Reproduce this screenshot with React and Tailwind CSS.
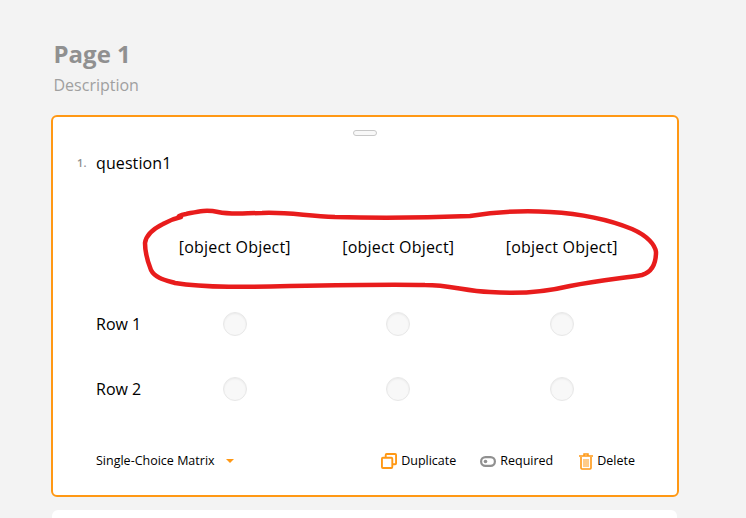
const font = "font-['Open_Sans',sans-serif]";

function Radio() {
  return (
    <div className="w-6 h-6 mx-auto rounded-full bg-[#f8f8f8] border border-[#e8e8e8] shadow-[inset_0_1px_2px_rgba(0,0,0,0.06)]" />
  );
}

function MatrixRow({ label }) {
  return (
    <>
      <div className="text-[16px] leading-[24px] font-medium text-black">{label}</div>
      <Radio />
      <Radio />
      <Radio />
    </>
  );
}

function ColumnHead() {
  return (
    <div className="text-[16px] leading-[20px] font-medium tracking-[0.2px] text-black text-center">[object Object]</div>
  );
}

function Annotation() {
  return (
    <svg
      className="absolute left-0 top-0 pointer-events-none"
      width="746"
      height="518"
      viewBox="0 0 746 518"
      fill="none"
    >
      <path
        d="M181 217 C176 217 180 215 186 214 C196 212 205 209 218 212 C232 215 245 213 262 213 C285 212 300 215 335 217 C370 218 420 218 470 216 C495 212 520 210 550 212 C585 214 610 220 632 229 C648 236 655 245 656 252 C656 263 652 272 642 275 C625 278 600 280 570 286 C545 292 515 294 490 292 C465 291 450 285 425 285 C390 284 340 285 290 286 C250 287 205 288 175 283 C165 280 155 278 151 270 C147 260 145 250 145 243 C146 235 155 228 163 224 C170 220 176 218 181 217 Z"
        stroke="#e81c1c"
        strokeWidth="4.5"
        strokeLinecap="round"
        strokeLinejoin="round"
      />
    </svg>
  );
}

function DuplicateIcon() {
  return (
    <svg width="16" height="16" viewBox="0 0 17 17" fill="none" stroke="#ff9814" strokeWidth="2">
      <path d="M5 4.5 V2 a1 1 0 0 1 1 -1 H15 a1 1 0 0 1 1 1 V11 a1 1 0 0 1 -1 1 H12.5" />
      <rect x="1" y="5" width="11" height="11" rx="1" />
    </svg>
  );
}

function ToggleIcon() {
  return (
    <svg width="16" height="11" viewBox="0 0 16 11" fill="none">
      <rect x="1.1" y="1.1" width="13.8" height="8.8" rx="4.4" stroke="#909090" strokeWidth="2.2" />
      <circle cx="5.5" cy="5.5" r="1.8" fill="#909090" />
    </svg>
  );
}

function TrashIcon() {
  return (
    <svg width="14" height="17" viewBox="0 0 14 17" fill="none" stroke="#ff9814">
      <path d="M0 3 H14 M5 3 V1 H9 V3" strokeWidth="1.5" />
      <path d="M2 4 V15 a1 1 0 0 0 1 1 H11 a1 1 0 0 0 1 -1 V4" strokeWidth="1.6" />
      <path d="M5 6 V14 M7 6 V14 M9 6 V14" strokeWidth="1" />
    </svg>
  );
}

export default function App() {
  return (
    <div className={`relative w-[746px] h-[518px] overflow-hidden bg-[#f3f3f3] ${font}`}>
      <div className="pl-[51px] w-[679px] pt-[37px]">
        <div className="pl-[2.5px]">
          <h1 className="text-[24px] leading-[33px] font-bold text-[#909090]">Page 1</h1>
          <p className="text-[16px] leading-[22px] mt-[4px] text-[#a0a0a0]">Description</p>
        </div>

        <div className="mt-[19px] h-[382px] bg-white border-2 border-[#ff9814] rounded-[6px] pl-[43px] pr-[34px] flex flex-col">
          <div className="w-6 h-[6px] mt-[13px] ml-[257px] rounded-full border border-[#c8c8c8] bg-[#f8f8f8]" />
          <div className="relative mt-[16px] text-[16px] leading-[22px] font-medium tracking-[0.1px] text-black">
            <span className="absolute left-[-19px] top-[4px] text-[11px] leading-[14px] font-semibold text-[#909090]">1.</span>
            question1
          </div>

          <div className="grid grid-cols-[57px_163.5px_163.5px_163.5px] items-center mt-[63px]">
            <div />
            <ColumnHead />
            <ColumnHead />
            <ColumnHead />
            <div className="h-[55px] col-span-4" />
            <MatrixRow label="Row 1" />
            <div className="h-[41px] col-span-4" />
            <MatrixRow label="Row 2" />
          </div>

          <div className="flex items-center mt-[50px] h-[20px] text-[12.5px] text-black font-medium">
            <span>Single-Choice Matrix</span>
            <span className="ml-[11px] w-0 h-0 border-x-[4px] border-x-transparent border-t-[4px] border-t-[#ff9814]" />
            <div className="ml-auto flex items-center pr-[8px]">
              <DuplicateIcon />
              <span className="ml-[4px]">Duplicate</span>
              <span className="ml-[24px]"><ToggleIcon /></span>
              <span className="ml-[4px]">Required</span>
              <span className="ml-[26px]"><TrashIcon /></span>
              <span className="ml-[4px]">Delete</span>
            </div>
          </div>
        </div>

        <div className="mt-[13px] ml-[1px] w-[625px] h-[40px] bg-white rounded-[6px]" />
      </div>
      <Annotation />
    </div>
  );
}
